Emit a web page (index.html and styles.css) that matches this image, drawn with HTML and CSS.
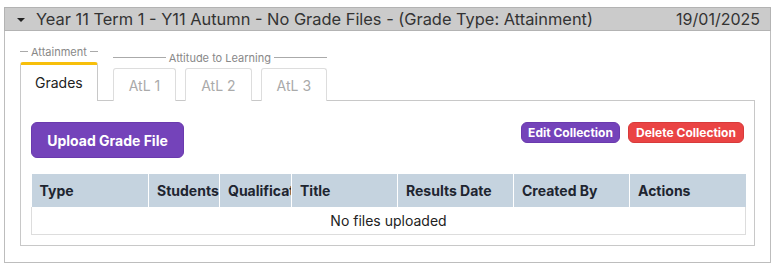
FILE: index.html
```html
<!DOCTYPE html>
<html>
<head>
<meta charset="utf-8">
<link rel="stylesheet" href="styles.css">
</head>
<body>
<div class="collection">
  <div class="coll-head">
    <span class="caret"></span>
    <span class="coll-title">Year 11 Term 1 - Y11 Autumn - No Grade Files - (Grade Type: Attainment)</span>
    <span class="coll-date">19/01/2025</span>
  </div>
  <div class="coll-body">
    <div class="tabbar">
      <div class="tabgroup">
        <div class="group-label">Attainment</div>
        <div class="tabs">
          <div class="tab active">Grades</div>
        </div>
      </div>
      <div class="tabgroup">
        <div class="group-label">Attitude to Learning</div>
        <div class="tabs">
          <div class="tab">AtL 1</div>
          <div class="tab">AtL 2</div>
          <div class="tab">AtL 3</div>
        </div>
      </div>
    </div>
    <div class="panel">
      <div class="actions">
        <button class="btn btn-upload">Upload Grade File</button>
        <div class="small-actions">
          <button class="btn btn-sm btn-purple">Edit Collection</button>
          <button class="btn btn-sm btn-red">Delete Collection</button>
        </div>
      </div>
      <table class="files">
        <colgroup>
          <col class="c-type"><col class="c-students"><col class="c-qual"><col class="c-title"><col class="c-date"><col class="c-by"><col class="c-act">
        </colgroup>
        <thead>
          <tr>
            <th>Type</th><th>Students</th><th><span class="clip">Qualification</span></th><th>Title</th><th>Results Date</th><th>Created By</th><th>Actions</th>
          </tr>
        </thead>
        <tbody>
          <tr><td colspan="7" class="empty">No files uploaded</td></tr>
        </tbody>
      </table>
    </div>
  </div>
</div>
</body>
</html>
```
FILE: styles.css
```css
* { box-sizing: border-box; }
body {
  margin: 0;
  padding: 7px 4px 0 4px;
  font-family: Inter, "Noto Sans", sans-serif;
  color: #222;
  background: #fff;
}
.collection {
  width: 767px;
  height: 256px;
  border: 1px solid #bdbdbd;
  border-top: none;
}
.coll-head {
  display: flex;
  align-items: center;
  height: 24px;
  margin: 0 -1px;
  background: #cbcbcb;
  border: 1px solid #b3b3b3;
  padding: 0 10px 0 12px;
  font-size: 16px;
  color: #333;
}
.caret {
  width: 0; height: 0;
  border-left: 4px solid transparent;
  border-right: 4px solid transparent;
  border-top: 4px solid #222;
  margin-right: 11px;
  margin-top: 1px;
}
.coll-title { flex: 1; font-size: 16.4px; }
.coll-date { font-size: 16px; }
.coll-body {
  padding: 14px 15px 0 15px;
}
.tabbar {
  display: flex;
  align-items: flex-end;
  gap: 15px;
  margin-bottom: -1px;
  position: relative;
  z-index: 1;
}
.tabgroup { display: flex; flex-direction: column; }
.group-label {
  display: flex;
  align-items: center;
  gap: 3px;
  font-size: 11px;
  color: #888;
  height: 13px;
  margin-bottom: 4px;
  white-space: nowrap;
}
.group-label::before, .group-label::after {
  content: "";
  flex: 1;
  border-top: 1px solid #aaa;
}
.tabs { display: flex; gap: 9px; }
.tab {
  height: 33px;
  padding: 0 15px;
  display: flex;
  align-items: center;
  font-size: 14px;
  color: #aaa;
  border: 1px solid #dddddd;
  border-bottom: none;
  border-radius: 3px 3px 0 0;
  background: #fff;
}
.tab.active {
  height: 39px;
  padding: 0 14px 2px 14px;
  color: #222;
  border: 1px solid #c8c8c8;
  border-top: 3px solid #f7bf0b;
  border-bottom: none;
}
.panel {
  border: 1px solid #c8c8c8;
  padding: 21px 10px 10px 10px;
  height: 146px;
}
.actions {
  display: flex;
  justify-content: space-between;
  align-items: flex-start;
  margin-bottom: 16px;
}
.btn {
  font-family: Inter, "Noto Sans", sans-serif;
  font-weight: 700;
  color: #fff;
  border: 1px solid transparent;
  cursor: pointer;
  white-space: nowrap;
}
.btn-upload {
  width: 153px;
  height: 36px;
  font-size: 14px;
  border-radius: 6px;
  background: #7443ba;
  border-color: #6a3aae;
}
.small-actions { display: flex; gap: 8px; }
.btn-sm {
  height: 21px;
  font-size: 12px;
  padding: 0 6px;
  border-radius: 6px;
}
.btn-purple { background: #7443ba; border-color: #6a3aae; min-width: 99px; }
.btn-red { background: #ea4444; border-color: #d83a3a; min-width: 116px; }
.files {
  width: 714px;
  table-layout: fixed;
  border-collapse: collapse;
  font-size: 14px;
}
.c-type { width: 117px; }
.c-students { width: 71px; }
.c-qual { width: 72px; }
.c-title { width: 106px; }
.c-date { width: 116px; }
.c-by { width: 116px; }
.c-act { width: 116px; }
.files th {
  background: #c5d3df;
  height: 33px;
  padding: 0 0 0 8px;
  text-align: left;
  font-weight: 700;
  color: #1e2530;
  border-left: 1px solid #fff;
  white-space: nowrap;
  overflow: hidden;
}
.files th:first-child { border-left: none; }
.clip { display: block; width: 63px; overflow: hidden; }
.files td.empty {
  height: 27px;
  text-align: center;
  border: 1px solid #dddddd;
  border-top: none;
  color: #222;
  padding: 0;
}
```
